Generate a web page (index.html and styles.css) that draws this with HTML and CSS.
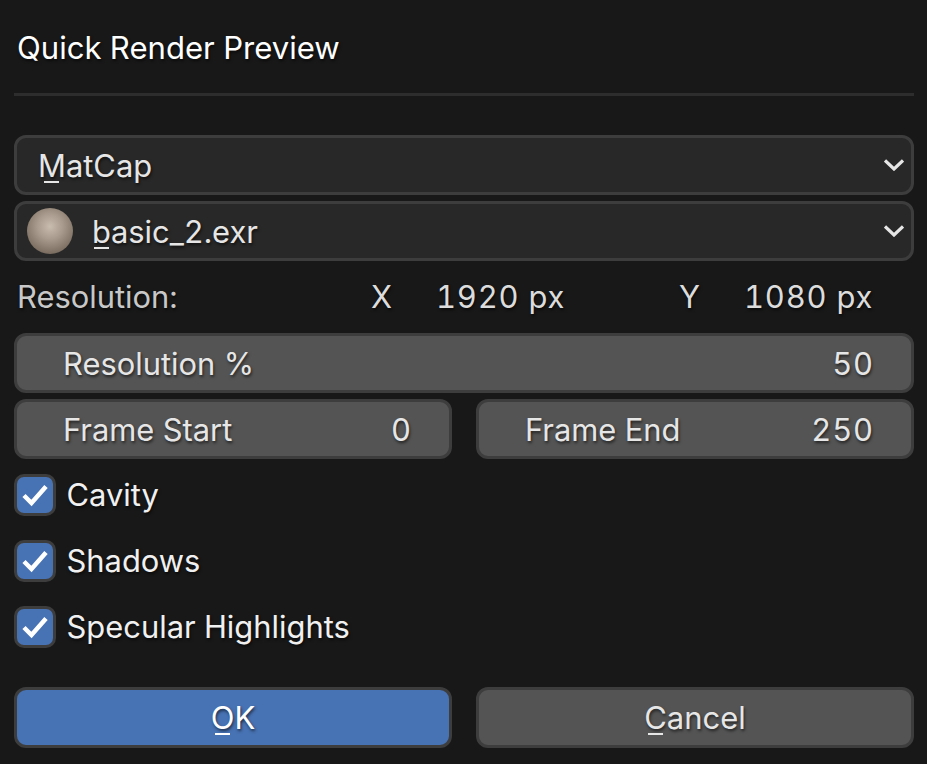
FILE: index.html
```html
<!DOCTYPE html>
<html lang="en">
<head>
    <meta charset="UTF-8">
    <title>Quick Render Preview</title>
    <link rel="stylesheet" href="styles.css">
</head>
<body>

<div class="dialog">
    <h1 class="title">Quick Render Preview</h1>
    <div class="separator"></div>

    <div class="rows">
        <!-- Dropdowns -->
        <div class="field dropdown">
            <span class="dropdown-label"><u>M</u>atCap</span>
            <svg class="chevron" viewBox="0 0 20 12"><path d="M1 1.5 L10 10 L19 1.5"/></svg>
        </div>
        <div class="field dropdown">
            <span class="sphere"></span>
            <span class="dropdown-label with-icon"><u>b</u>asic_2.exr</span>
            <svg class="chevron" viewBox="0 0 20 12"><path d="M1 1.5 L10 10 L19 1.5"/></svg>
        </div>

        <!-- Resolution -->
        <div class="row resolution">
            <span>Resolution:</span>
            <span class="res-text">X</span>
            <span class="res-text num">1920 px</span>
            <span class="res-text">Y</span>
            <span class="res-text num">1080 px</span>
        </div>

        <div class="field number">
            <span>Resolution %</span>
            <span class="num">50</span>
        </div>
        <div class="row two-col">
            <div class="field number">
                <span>Frame Start</span>
                <span class="num">0</span>
            </div>
            <div class="field number">
                <span>Frame End</span>
                <span class="num">250</span>
            </div>
        </div>

        <!-- Checkboxes -->
        <div class="row check-row">
            <span class="checkbox"><svg viewBox="0 0 28 24"><path d="M3 12.5 L10.5 20 L25 3.5"/></svg></span>
            <span>Cavity</span>
        </div>
        <div class="row check-row">
            <span class="checkbox"><svg viewBox="0 0 28 24"><path d="M3 12.5 L10.5 20 L25 3.5"/></svg></span>
            <span>Shadows</span>
        </div>
        <div class="row check-row">
            <span class="checkbox"><svg viewBox="0 0 28 24"><path d="M3 12.5 L10.5 20 L25 3.5"/></svg></span>
            <span>Specular Highlights</span>
        </div>
    </div>

    <div class="row two-col actions">
        <button class="btn btn-primary"><u>O</u>K</button>
        <button class="btn"><u>C</u>ancel</button>
    </div>
</div>

</body>
</html>
```

FILE: styles.css
```css
html, body {
    margin: 0;
    padding: 0;
    height: 100%;
}
body {
    background-color: #181818;
    color: #e6e6e6;
    font-family: 'Inter', 'Liberation Sans', sans-serif;
    font-size: 30.9px;
    font-variant-numeric: tabular-nums;
    overflow: hidden;
}
/* short bar centred under the letter, the native underline is too wide */
u {
    position: relative;
    text-decoration: none;
}
u::after {
    content: "";
    position: absolute;
    left: 50%;
    bottom: 1px;
    width: 15px;
    height: 2px;
    margin-left: -7.5px;
    background-color: currentColor;
}
.dialog {
    box-sizing: border-box;
    width: 927px;
    height: 764px;
    padding: 0 13px 0 14px;
    text-shadow: 1px 2px 3px rgba(0, 0, 0, 0.6);
}
.title {
    margin: 0;
    padding: 0 0 0 3px;
    height: 93px;
    line-height: 96px;
    font-size: 31.1px;
    font-weight: 400;
    color: #fff;
}
.separator {
    height: 3px;
    background-color: #2d2d2d;
    margin-bottom: 39px;
}
.rows {
    display: flex;
    flex-direction: column;
    gap: 6px;
}
.row {
    display: flex;
    align-items: center;
    height: 60px;
}
.two-col {
    display: grid;
    grid-template-columns: 1fr 1fr;
    gap: 24px;
}
.num {
    letter-spacing: 0.8px;
    margin-right: -0.8px;
}
.field {
    box-sizing: border-box;
    height: 60px;
    border: 3px solid #3d3d3d;
    border-radius: 12px;
    display: flex;
    align-items: center;
}
.dropdown {
    background-color: #282828;
    padding: 0 7px 0 10px;
    color: #e6e6e6;
}
.dropdown-label {
    flex: 1;
    padding: 1px 0 0 11px;
}
.dropdown-label.with-icon {
    padding-left: 19px;
}
.chevron {
    width: 20px;
    height: 12px;
    fill: none;
    stroke: #e6e6e6;
    stroke-width: 3.2;
}
.sphere {
    width: 46px;
    height: 46px;
    border-radius: 50%;
    background: radial-gradient(circle at 50% 40%, #c9bdb0 0%, #a99b8d 35%, #7f7265 72%, #52493f 100%);
}
.resolution {
    display: grid;
    grid-template-columns: 354px 65px 243px 65px auto;
    align-items: center;
    padding-left: 3px;
    padding-bottom: 2px;
    box-sizing: border-box;
    color: #c8c8c8;
}
.res-text {
    color: #dcdcdc;
}
.number {
    background-color: #545454;
    justify-content: space-between;
    padding: 1px 38px 0 46px;
    color: #e6e6e6;
}
.check-row {
    color: #f0f0f0;
    gap: 10.5px;
}
.check-row span:last-child {
    padding-bottom: 2px;
}
.checkbox {
    box-sizing: border-box;
    width: 42px;
    height: 42px;
    background-color: #4772b3;
    border: 3px solid #3d3d3d;
    border-radius: 10px;
    display: flex;
    align-items: center;
    justify-content: center;
}
.checkbox svg {
    width: 28px;
    height: 24px;
    flex: none;
    fill: none;
    stroke: #fff;
    stroke-width: 4.5;
}
.actions {
    margin-top: 30px;
}
.btn {
    box-sizing: border-box;
    height: 61px;
    border: 3px solid #3d3d3d;
    border-radius: 12px;
    background-color: #545454;
    color: #e6e6e6;
    font-family: inherit;
    font-size: 31px;
    text-shadow: inherit;
    padding: 0;
}
.btn-primary {
    background-color: #4772b3;
    color: #fff;
}
```
